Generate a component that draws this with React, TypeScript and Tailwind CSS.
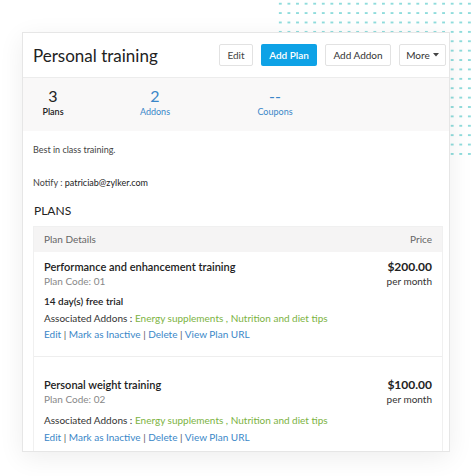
import React from 'react';

const font = { fontFamily: 'Lato, "Open Sans", sans-serif' };

interface Plan {
  name: string;
  code: string;
  price: string;
  trial?: string;
}

const plans: Plan[] = [
  { name: 'Performance and enhancement training', code: '01', price: '$200.00', trial: '14 day(s) free trial' },
  { name: 'Personal weight training', code: '02', price: '$100.00' },
];

const PlanRow: React.FC<{ plan: Plan; last?: boolean }> = ({ plan, last }) => (
  <div className={`px-[10px] ${plan.trial ? 'pt-[8px] pb-[15px]' : 'pt-[21px] pb-[8px]'} ${last ? '' : 'border-b border-[#eeeeee]'}`}>
    <div className="flex justify-between">
      <div>
        <div className="text-[11px] leading-[14px] font-semibold text-[#222]">{plan.name}</div>
        <div className="text-[10px] leading-[14px] text-[#888]">Plan Code: {plan.code}</div>
      </div>
      <div className="text-right">
        <div className="text-[12px] leading-[14px] font-bold text-[#222]">{plan.price}</div>
        <div className="text-[10px] leading-[14px] text-[#333]">per month</div>
      </div>
    </div>
    {plan.trial && <div className="text-[10px] leading-[14px] font-semibold text-[#222] mt-[6px]">{plan.trial}</div>}
    <div className={`text-[10px] leading-[14px] text-[#333] ${plan.trial ? 'mt-[3px]' : 'mt-[7px]'}`}>
      Associated Addons : <span className="text-[#7cb342]">Energy supplements , Nutrition and diet tips</span>
    </div>
    <div className={`text-[10px] leading-[14px] text-[#3a87c8] ${plan.trial ? 'mt-[2px]' : 'mt-[3px]'}`}>
      Edit <span className="text-[#555]">|</span> Mark as Inactive <span className="text-[#555]">|</span> Delete{' '}
      <span className="text-[#555]">|</span> View Plan URL
    </div>
  </div>
);

export default function App() {
  return (
    <div className="relative w-[474px] h-[476px] bg-white overflow-hidden" style={font}>
      <div className="absolute right-0 top-0 w-[200px] h-[158px] bg-[radial-gradient(circle,#8fdcdc_1.1px,transparent_1.4px)] bg-[length:8.6px_9.4px] bg-[position:2px_-1px]" />
      <div className="relative pt-[32px] pl-[22px]">
        <div className="w-[428px] h-[420px] overflow-hidden bg-white border border-[#e6e6e6] shadow-[0_6px_24px_rgba(0,0,0,0.07)]">
          <div className="flex items-center justify-between h-[45px] pl-[10px] pr-[3px] border-b border-[#ececec]">
            <h1 className="text-[17px] text-[#222] leading-none">Personal training</h1>
            <div className="flex items-center gap-[8px] text-[10px]">
              <button className="h-[22px] w-[34px] border border-[#e2e2e2] rounded-[2px] text-[#444] bg-white">Edit</button>
              <button className="h-[22px] w-[56px] rounded-[2px] text-white bg-[#0ea2e6] font-semibold">Add Plan</button>
              <button className="h-[22px] w-[66px] border border-[#e2e2e2] rounded-[2px] text-[#333] bg-white">Add Addon</button>
              <button className="h-[22px] w-[47px] border border-[#e2e2e2] rounded-[2px] text-[#333] bg-white flex items-center justify-center gap-[3px]">
                More
                <svg width="6" height="4" viewBox="0 0 6 4"><path d="M0 0h6L3 3.5z" fill="#444" /></svg>
              </button>
            </div>
          </div>
          <div className="flex h-[53px] bg-[#f9f8f8] pt-[9px]">
            <div className="w-[60px] flex flex-col items-center">
              <div className="text-[16px] leading-[18px] text-[#222]">3</div>
              <div className="text-[9px] leading-[14px] text-[#222] font-semibold">Plans</div>
            </div>
            <div className="w-[60px] flex flex-col items-center ml-[42px]">
              <div className="text-[16px] leading-[18px] text-[#3a87c8]">2</div>
              <div className="text-[9px] leading-[14px] text-[#3a87c8]">Addons</div>
            </div>
            <div className="w-[60px] flex flex-col items-center ml-[60px]">
              <div className="text-[16px] leading-[18px] text-[#3a87c8]">--</div>
              <div className="text-[9px] leading-[14px] text-[#3a87c8]">Coupons</div>
            </div>
          </div>
          <div className="pl-[10px] pr-[6px]">
            <p className="text-[9px] leading-[12px] text-[#444] mt-[13px]">Best in class training.</p>
            <p className="text-[9px] leading-[12px] text-[#444] mt-[21px]">
              Notify : <span className="text-[#222]">patriciab@zylker.com</span>
            </p>
            <h2 className="text-[12px] leading-[14px] text-[#222] mt-[15px] pl-[1px]">PLANS</h2>
            <div className="mt-[8px] border border-[#f0f0f0]">
              <div className="flex justify-between items-center h-[25px] bg-[#f5f4f4] px-[10px] text-[10px] text-[#666]">
                <span>Plan Details</span>
                <span>Price</span>
              </div>
              {plans.map((p, i) => (
                <PlanRow key={p.code} plan={p} last={i === plans.length - 1} />
              ))}
            </div>
          </div>
        </div>
      </div>
    </div>
  );
}
